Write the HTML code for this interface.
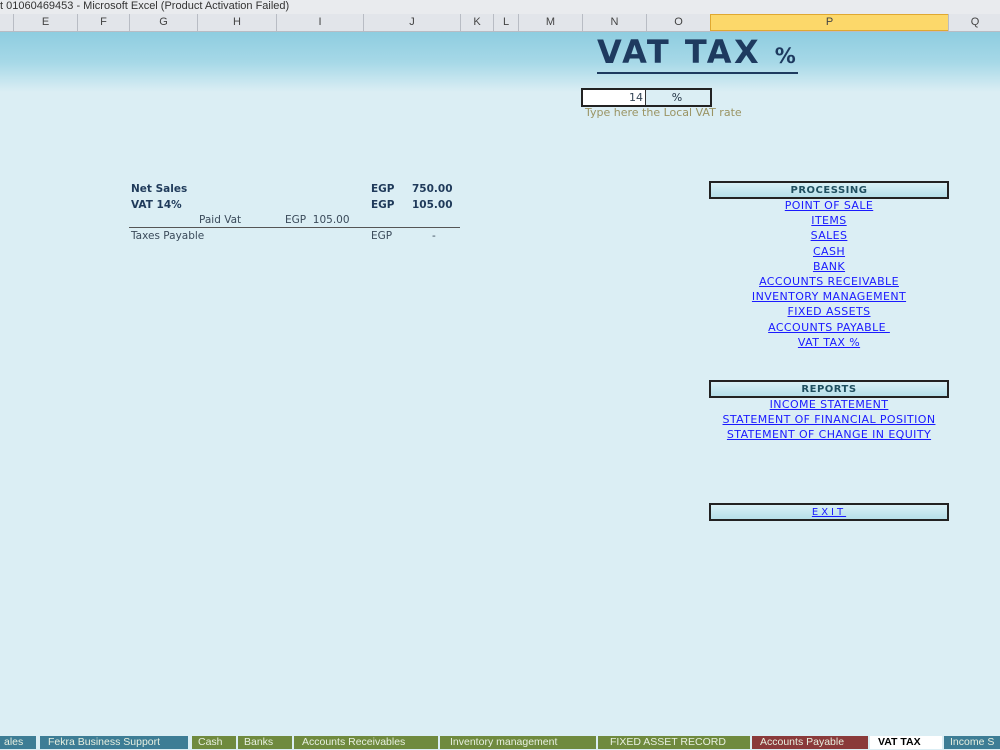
<!DOCTYPE html>
<html><head><style>
body{margin:0;width:1000px;height:750px;overflow:hidden;position:relative;font-family:"Liberation Sans",sans-serif;background:#dbeef4}
.a{position:absolute;white-space:nowrap}
#tb{left:0;top:0;width:1000px;height:14px;background:#e9ebee;font-size:11px;color:#333;line-height:13px}
#hd{left:0;top:14px;width:1000px;height:17px;background:#e2e5ea;border-bottom:1px solid #b8bcc4}
.c{position:absolute;top:0;height:17px;border-left:1px solid #b8bcc4;font-size:11px;color:#444;text-align:center;line-height:17px}
#gr{left:0;top:32px;width:1000px;height:60px;background:linear-gradient(#8ecde0,#a6d8e7 50%,#dbeef4)}
.l{position:absolute;left:709px;width:240px;text-align:center;font-size:11px;letter-spacing:0.4px;font-family:"DejaVu Sans",sans-serif;color:#1a1aff;text-decoration:underline;line-height:14px}
.box{position:absolute;left:709px;width:236px;height:14px;border:2px solid #222;background:linear-gradient(#d8f0f6,#b6dfe9);font-size:10px;letter-spacing:0.5px;font-family:"DejaVu Sans",sans-serif;font-weight:bold;color:#1f4f5f;text-align:center;line-height:16px}
.t{font-size:10.5px;font-family:"DejaVu Sans",sans-serif;color:#1f3a5a}
#tabs{left:0;top:735px;width:1000px;height:15px;background:#dbeef4;font-size:10.5px;line-height:13px}
.tab{position:absolute;top:1px;height:13px;color:#e8f0e0;padding:0 4px;box-sizing:border-box;overflow:hidden}
</style></head><body>
<div class="a" id="tb">t 01060469453 - Microsoft Excel (Product Activation Failed)</div>
<div class="a" id="hd">
<div class="c" style="left:13px;width:63px">E</div>
<div class="c" style="left:77px;width:51px">F</div>
<div class="c" style="left:129px;width:67px">G</div>
<div class="c" style="left:197px;width:78px">H</div>
<div class="c" style="left:276px;width:86px">I</div>
<div class="c" style="left:363px;width:96px">J</div>
<div class="c" style="left:460px;width:32px">K</div>
<div class="c" style="left:493px;width:24px">L</div>
<div class="c" style="left:518px;width:63px">M</div>
<div class="c" style="left:582px;width:63px">N</div>
<div class="c" style="left:646px;width:63px">O</div>
<div class="c" style="left:710px;width:237px;background:#fcd86a;border:1px solid #e0a830;height:15px;line-height:15px">P</div>
<div class="c" style="left:948px;width:52px">Q</div>
</div>
<div class="a" id="gr"></div>
<div class="a" style="left:597px;top:37px;font-size:32px;font-weight:900;color:#1e3a5f;font-family:'DejaVu Sans',sans-serif;letter-spacing:2.5px;border-bottom:2px solid #1e3a5f;line-height:31px">VAT TAX <span style="font-size:21px">%</span></div>
<div class="a" style="left:581px;top:88px;width:127px;height:15px;border:2px solid #222;background:#dbeef4"></div>
<div class="a" style="left:583px;top:90px;width:62px;height:15px;background:#fff;border-right:1px solid #333;font-size:11px;font-family:'DejaVu Sans',sans-serif;color:#345;text-align:right;line-height:15px"><span style="padding-right:2px">14</span></div>
<div class="a" style="left:646px;top:90px;width:62px;font-size:11px;font-family:'DejaVu Sans',sans-serif;color:#234;text-align:center;line-height:15px">%</div>
<div class="a" style="left:585px;top:106px;font-size:11px;font-family:'DejaVu Sans',sans-serif;color:#9a9464">Type here the Local VAT rate</div>
<div class="a t" style="left:131px;top:183px;font-weight:bold">Net Sales</div>
<div class="a t" style="left:371px;top:183px;font-weight:bold">EGP</div>
<div class="a t" style="left:412px;top:183px;font-weight:bold">750.00</div>
<div class="a t" style="left:131px;top:199px;font-weight:bold">VAT 14%</div>
<div class="a t" style="left:371px;top:199px;font-weight:bold">EGP</div>
<div class="a t" style="left:412px;top:199px;font-weight:bold">105.00</div>
<div class="a t" style="left:199px;top:214px;color:#3a4a5a">Paid Vat</div>
<div class="a t" style="left:285px;top:214px;color:#3a4a5a">EGP&nbsp;&nbsp;105.00</div>
<div class="a" style="left:129px;top:227px;width:331px;height:1px;background:#555"></div>
<div class="a t" style="left:131px;top:230px;color:#3a4a5a">Taxes Payable</div>
<div class="a t" style="left:371px;top:230px;color:#3a4a5a">EGP</div>
<div class="a t" style="left:432px;top:230px;color:#3a4a5a">-</div>
<div class="box" style="top:181px">PROCESSING</div>
<div class="l" style="top:199px">POINT OF SALE</div>
<div class="l" style="top:214px">ITEMS</div>
<div class="l" style="top:229px">SALES</div>
<div class="l" style="top:245px">CASH</div>
<div class="l" style="top:260px">BANK</div>
<div class="l" style="top:275px">ACCOUNTS RECEIVABLE</div>
<div class="l" style="top:290px">INVENTORY MANAGEMENT</div>
<div class="l" style="top:305px">FIXED ASSETS</div>
<div class="l" style="top:321px">ACCOUNTS PAYABLE&nbsp;</div>
<div class="l" style="top:336px">VAT TAX %</div>
<div class="box" style="top:380px">REPORTS</div>
<div class="l" style="top:398px">INCOME STATEMENT</div>
<div class="l" style="top:413px">STATEMENT OF FINANCIAL POSITION</div>
<div class="l" style="top:428px">STATEMENT OF CHANGE IN EQUITY</div>
<div class="box" style="top:503px;letter-spacing:3px;font-weight:normal;color:#1a1aff;text-decoration:underline">EXIT</div>
<div class="a" id="tabs">
<div class="tab" style="left:0;width:36px;background:#3d7d95">ales</div>
<div class="tab" style="left:40px;width:148px;background:#3d7d95;padding-left:8px">Fekra Business Support</div>
<div class="tab" style="left:192px;width:44px;background:#6f8a3e;padding-left:6px">Cash</div>
<div class="tab" style="left:238px;width:54px;background:#6f8a3e;padding-left:6px">Banks</div>
<div class="tab" style="left:294px;width:144px;background:#6f8a3e;padding-left:8px">Accounts Receivables</div>
<div class="tab" style="left:440px;width:156px;background:#6f8a3e;padding-left:10px">Inventory management</div>
<div class="tab" style="left:598px;width:152px;background:#6f8a3e;padding-left:12px">FIXED ASSET RECORD</div>
<div class="tab" style="left:752px;width:116px;background:#8a3a3a;padding-left:8px">Accounts Payable</div>
<div class="tab" style="left:870px;width:72px;background:#fff;color:#000;font-weight:bold;padding-left:8px">VAT TAX</div>
<div class="tab" style="left:944px;width:56px;background:#3d7d95;padding-left:6px">Income S</div>
</div>
</body></html>
